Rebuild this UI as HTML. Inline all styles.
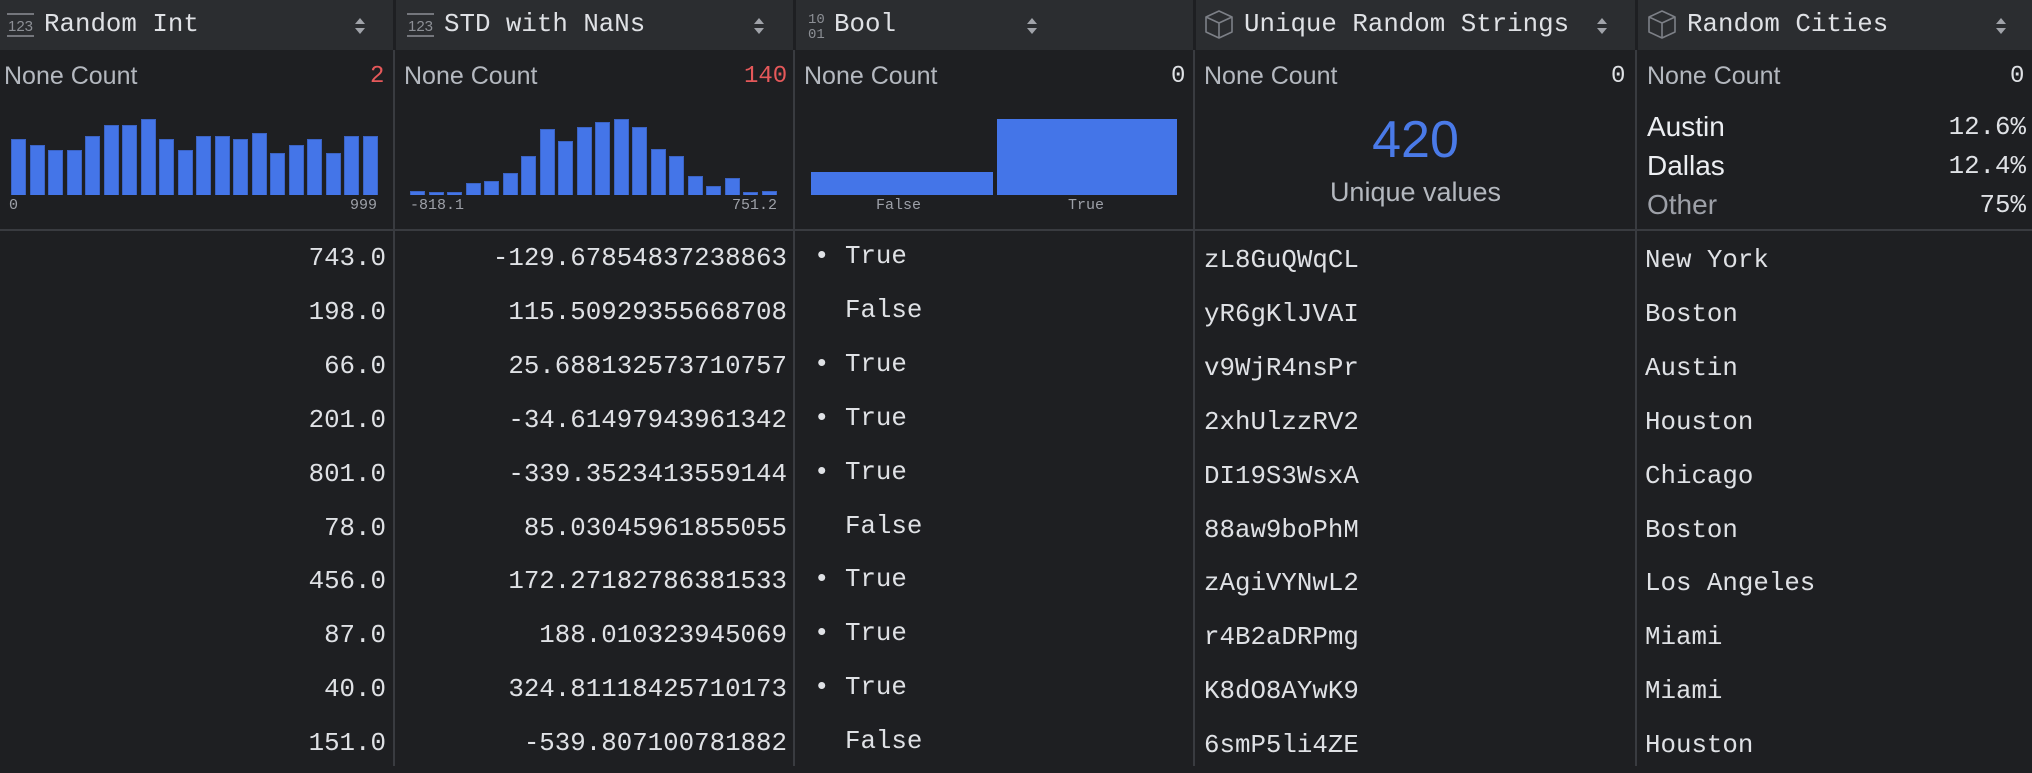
<!DOCTYPE html>
<html><head><meta charset="utf-8"><style>
*{margin:0;padding:0;box-sizing:border-box}
body{width:2032px;height:766px;background:#1e1f22;overflow:hidden;position:relative;font-family:"Liberation Mono",monospace;color:#dfe1e5}
.hdr{position:absolute;top:0;height:50px;background:#2b2d30}
.ht{position:absolute;top:7px;font-size:25.8px;color:#dfe1e5;line-height:36px}
.ic{position:absolute;top:12px}
.arr{position:absolute;top:16px;width:12px;height:20px}
.vd{position:absolute;width:2px;background:#393b40}
.nc{position:absolute;top:61px;font-family:"Liberation Sans",sans-serif;font-size:25px;color:#b4b8bf;line-height:30px}
.ncv{position:absolute;top:62px;font-size:24px;line-height:30px}
.bars{position:absolute;display:flex;align-items:flex-end;height:80px}
.bars div{background:#4475e8;border:1px solid #3b63c4;border-bottom:none;margin-right:3.5px}
.lbl{position:absolute;font-size:15px;color:#9da0a8;top:197px}
.cell{position:absolute;font-size:25.8px;line-height:30px;color:#dfe1e5;white-space:pre}
.r{text-align:right}
</style></head><body>
<div class="hdr" style="left:0;width:393px"></div>
<div class="hdr" style="left:396px;width:397px"></div>
<div class="hdr" style="left:796px;width:397px"></div>
<div class="hdr" style="left:1196px;width:439px"></div>
<div class="hdr" style="left:1638px;width:394px"></div>

<svg class="ic" style="left:6px" width="30" height="26"><line x1="1" y1="2" x2="28" y2="2" stroke="#8c8f95" stroke-width="1.5"/><line x1="1" y1="24" x2="28" y2="24" stroke="#8c8f95" stroke-width="1.5"/><text x="14.5" y="19" font-family="Liberation Sans" font-size="15" fill="#8c8f95" text-anchor="middle">123</text></svg>
<div class="ht" style="left:44px">Random Int</div>
<svg class="ic" style="left:406px" width="30" height="26"><line x1="1" y1="2" x2="28" y2="2" stroke="#8c8f95" stroke-width="1.5"/><line x1="1" y1="24" x2="28" y2="24" stroke="#8c8f95" stroke-width="1.5"/><text x="14.5" y="19" font-family="Liberation Sans" font-size="15" fill="#8c8f95" text-anchor="middle">123</text></svg>
<div class="ht" style="left:444px">STD with NaNs</div>
<svg class="ic" style="left:806px;top:9px" width="28" height="32"><text x="2" y="14" font-family="Liberation Mono" font-size="14" fill="#8c8f95">10</text><text x="2" y="29" font-family="Liberation Mono" font-size="14" fill="#8c8f95">01</text></svg>
<div class="ht" style="left:834px">Bool</div>
<svg class="ic" style="left:1205px;top:10px" width="30" height="30"><path d="M14 1 L27 7 L27 22 L14 28 L1 22 L1 7 Z M1 7 L14 13 L27 7 M14 13 L14 28" fill="none" stroke="#7d8087" stroke-width="1.6" stroke-linejoin="round"/></svg>
<div class="ht" style="left:1244px">Unique Random Strings</div>
<svg class="ic" style="left:1648px;top:10px" width="30" height="30"><path d="M14 1 L27 7 L27 22 L14 28 L1 22 L1 7 Z M1 7 L14 13 L27 7 M14 13 L14 28" fill="none" stroke="#7d8087" stroke-width="1.6" stroke-linejoin="round"/></svg>
<div class="ht" style="left:1687px">Random Cities</div>

<svg class="arr" style="left:354px"><path d="M1 8 L6 2 L11 8 Z M1 12 L6 18 L11 12 Z" fill="#a0a3a9"/></svg>
<svg class="arr" style="left:753px"><path d="M1 8 L6 2 L11 8 Z M1 12 L6 18 L11 12 Z" fill="#a0a3a9"/></svg>
<svg class="arr" style="left:1026px"><path d="M1 8 L6 2 L11 8 Z M1 12 L6 18 L11 12 Z" fill="#a0a3a9"/></svg>
<svg class="arr" style="left:1596px"><path d="M1 8 L6 2 L11 8 Z M1 12 L6 18 L11 12 Z" fill="#a0a3a9"/></svg>
<svg class="arr" style="left:1995px"><path d="M1 8 L6 2 L11 8 Z M1 12 L6 18 L11 12 Z" fill="#a0a3a9"/></svg>

<div class="vd" style="left:393px;top:50px;height:716px"></div>
<div class="vd" style="left:793px;top:50px;height:716px"></div>
<div class="vd" style="left:1193px;top:50px;height:716px"></div>
<div class="vd" style="left:1635px;top:50px;height:716px"></div>
<div style="position:absolute;left:0;top:229px;width:2032px;height:2px;background:#393b40"></div>

<div class="nc" style="left:4px">None Count</div>
<div class="ncv" style="left:370px;color:#e5585a">2</div>
<div class="bars" style="left:11px;top:115px">
<div style="width:15px;height:56px"></div><div style="width:15px;height:50px"></div><div style="width:15px;height:45px"></div><div style="width:15px;height:45px"></div><div style="width:15px;height:59px"></div><div style="width:15px;height:70px"></div><div style="width:15px;height:70px"></div><div style="width:15px;height:76px"></div><div style="width:15px;height:56px"></div><div style="width:15px;height:45px"></div><div style="width:15px;height:59px"></div><div style="width:15px;height:59px"></div><div style="width:15px;height:56px"></div><div style="width:15px;height:62px"></div><div style="width:15px;height:42px"></div><div style="width:15px;height:50px"></div><div style="width:15px;height:56px"></div><div style="width:15px;height:42px"></div><div style="width:15px;height:59px"></div><div style="width:15px;height:59px"></div>
</div>
<div class="lbl" style="left:9px">0</div>
<div class="lbl" style="left:350px">999</div>

<div class="nc" style="left:404px">None Count</div>
<div class="ncv" style="left:744px;color:#e5585a">140</div>
<div class="bars" style="left:410px;top:115px">
<div style="width:15px;height:4px"></div><div style="width:15px;height:3px"></div><div style="width:15px;height:3px"></div><div style="width:15px;height:12px"></div><div style="width:15px;height:14px"></div><div style="width:15px;height:22px"></div><div style="width:15px;height:39px"></div><div style="width:15px;height:66px"></div><div style="width:15px;height:54px"></div><div style="width:15px;height:68px"></div><div style="width:15px;height:73px"></div><div style="width:15px;height:76px"></div><div style="width:15px;height:68px"></div><div style="width:15px;height:46px"></div><div style="width:15px;height:39px"></div><div style="width:15px;height:19px"></div><div style="width:15px;height:9px"></div><div style="width:15px;height:17px"></div><div style="width:15px;height:3px"></div><div style="width:15px;height:4px"></div>
</div>
<div class="lbl" style="left:410px">-818.1</div>
<div class="lbl" style="left:732px">751.2</div>

<div class="nc" style="left:804px">None Count</div>
<div class="ncv" style="left:1171px;color:#dfe1e5">0</div>
<div style="position:absolute;left:811px;top:172px;width:182px;height:23px;background:#4475e8"></div>
<div style="position:absolute;left:997px;top:119px;width:180px;height:76px;background:#4475e8"></div>
<div class="lbl" style="left:876px">False</div>
<div class="lbl" style="left:1068px">True</div>

<div class="nc" style="left:1204px">None Count</div>
<div class="ncv" style="left:1611px;color:#dfe1e5">0</div>
<div style="position:absolute;left:1196px;width:439px;top:110px;text-align:center;font-family:'Liberation Sans',sans-serif;font-size:52px;line-height:60px;color:#4a7ae8">420</div>
<div style="position:absolute;left:1196px;width:439px;top:176px;text-align:center;font-family:'Liberation Sans',sans-serif;font-size:27px;line-height:32px;color:#b4b8bf">Unique values</div>

<div class="nc" style="left:1647px">None Count</div>
<div class="ncv" style="left:2010px;color:#dfe1e5">0</div>
<div style="position:absolute;left:1647px;top:111px;font-family:'Liberation Sans',sans-serif;font-size:28px;line-height:32px;color:#eceef2">Austin</div>
<div style="position:absolute;left:1647px;top:150px;font-family:'Liberation Sans',sans-serif;font-size:28px;line-height:32px;color:#eceef2">Dallas</div>
<div style="position:absolute;left:1647px;top:189px;font-family:'Liberation Sans',sans-serif;font-size:28px;line-height:32px;color:#9da0a8">Other</div>
<div class="cell r" style="left:1800px;width:226px;top:113px">12.6%</div>
<div class="cell r" style="left:1800px;width:226px;top:152px">12.4%</div>
<div class="cell r" style="left:1800px;width:226px;top:191px">75%</div>

<div class="cell r" style="left:0;width:386px;top:232px;line-height:53.9px">743.0
198.0
66.0
201.0
801.0
78.0
456.0
87.0
40.0
151.0</div>
<div class="cell r" style="left:400px;width:387px;top:232px;line-height:53.9px">-129.67854837238863
115.50929355668708
25.688132573710757
-34.61497943961342
-339.3523413559144
85.03045961855055
172.27182786381533
188.010323945069
324.81118425710173
-539.807100781882</div>
<div class="cell" style="left:814px;top:230px;line-height:53.9px">• True
  False
• True
• True
• True
  False
• True
• True
• True
  False</div>
<div class="cell" style="left:1204px;top:234px;line-height:53.9px">zL8GuQWqCL
yR6gKlJVAI
v9WjR4nsPr
2xhUlzzRV2
DI19S3WsxA
88aw9boPhM
zAgiVYNwL2
r4B2aDRPmg
K8dO8AYwK9
6smP5li4ZE</div>
<div class="cell" style="left:1645px;top:234px;line-height:53.9px">New York
Boston
Austin
Houston
Chicago
Boston
Los Angeles
Miami
Miami
Houston</div>
</body></html>
